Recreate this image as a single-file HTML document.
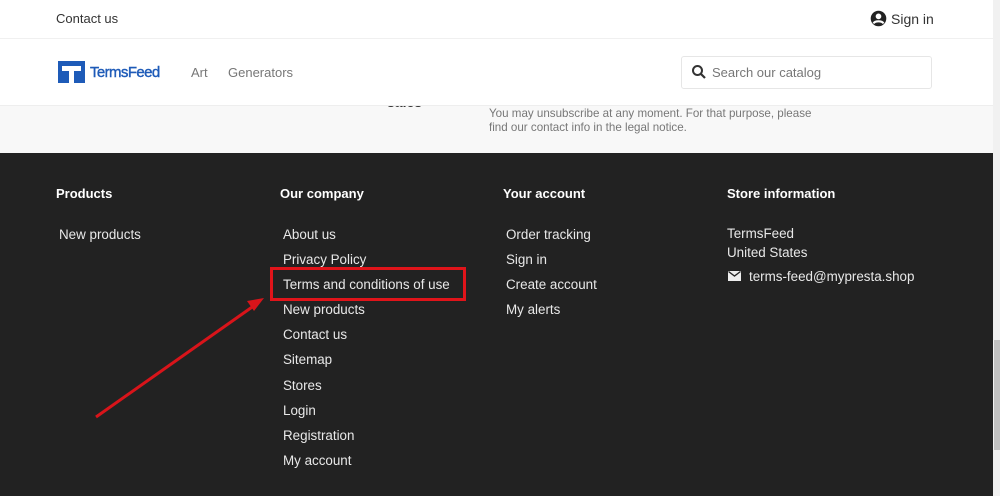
<!DOCTYPE html>
<html><head><style>
*{margin:0;padding:0;box-sizing:border-box}
body{width:1000px;height:496px;overflow:hidden;font-family:"Liberation Sans",sans-serif;background:#fff;position:relative}
.abs{position:absolute;white-space:nowrap}
.top{font-size:13px;color:#333}
.foot{position:absolute;left:0;top:153px;width:993px;height:343px;background:#222}
.h{font-size:13px;font-weight:bold;color:#fff}
.l{font-size:13.4px;color:#e8e8e8}
</style></head><body>
<div class="abs top" style="left:56px;top:11px">Contact us</div>
<svg class="abs" style="left:870px;top:10px" width="17" height="17" viewBox="0 0 24 24"><circle cx="12" cy="12" r="11" fill="#222"/><circle cx="12" cy="9" r="4" fill="#fff"/><path d="M5 19c2-4 12-4 14 0" stroke="#fff" stroke-width="3" fill="none"/></svg>
<div class="abs" style="left:891px;top:11px;font-size:14px;color:#333">Sign in</div>
<div class="abs" style="left:0;top:38px;width:993px;height:1px;background:#f0f0f0"></div>
<div class="abs" style="left:0;top:105px;width:993px;height:48px;background:#f8f8f8;border-top:1px solid #eee;overflow:hidden">
<div class="abs" style="left:387px;top:-12px;font-size:14px;font-weight:bold;color:#333">sales</div>
<div class="abs" style="left:489px;top:1px;font-size:11.6px;color:#777;line-height:14px">You may unsubscribe at any moment. For that purpose, please<br>find our contact info in the legal notice.</div>
</div>
<svg class="abs" style="left:58px;top:61px" width="27" height="22" viewBox="0 0 27 22"><rect width="27" height="22" fill="#1e5bb8"/><rect x="4" y="5" width="19" height="5" fill="#fff"/><rect x="11" y="5" width="5" height="17" fill="#fff"/></svg>
<div class="abs" style="left:90px;top:64px;font-size:15px;color:#1e5bb8;letter-spacing:-0.6px;-webkit-text-stroke:0.4px #1e5bb8">TermsFeed</div>
<div class="abs" style="left:191px;top:65px;font-size:13px;color:#777">Art</div>
<div class="abs" style="left:228px;top:65px;font-size:13px;color:#777">Generators</div>
<div class="abs" style="left:681px;top:56px;width:251px;height:33px;border:1px solid #e6e6e6;border-radius:3px"></div>
<svg class="abs" style="left:691px;top:64px" width="16" height="16" viewBox="0 0 16 16"><circle cx="6.5" cy="6.5" r="4.5" stroke="#333" stroke-width="2" fill="none"/><path d="M10 10l4 4" stroke="#333" stroke-width="2.2"/></svg>
<div class="abs" style="left:712px;top:65px;font-size:13px;color:#777">Search our catalog</div>
<div class="foot"></div>
<div class="abs" style="left:993px;top:0;width:7px;height:496px;background:#f1f1f1"></div>
<div class="abs" style="left:994px;top:340px;width:6px;height:110px;background:#c1c1c1"></div>
<div class="abs h" style="left:56px;top:186px">Products</div>
<div class="abs h" style="left:280px;top:186px">Our company</div>
<div class="abs h" style="left:503px;top:186px">Your account</div>
<div class="abs h" style="left:727px;top:186px">Store information</div>
<div class="abs l" style="left:59px;top:227px">New products</div>
<div class="abs l" style="left:283px;top:222px;line-height:25.1px">About us<br>Privacy Policy<br>Terms and conditions of use<br>New products<br>Contact us<br>Sitemap<br>Stores<br>Login<br>Registration<br>My account</div>
<div class="abs l" style="left:506px;top:222px;line-height:25.1px">Order tracking<br>Sign in<br>Create account<br>My alerts</div>
<div class="abs l" style="left:727px;top:224px;line-height:19px">TermsFeed<br>United States</div>
<svg class="abs" style="left:728px;top:271px" width="13" height="10" viewBox="0 0 13 10"><rect width="13" height="10" fill="#eee"/><path d="M0.5 0.5l6 4.5 6-4.5" stroke="#222" stroke-width="1.3" fill="none"/></svg>
<div class="abs l" style="left:749px;top:269px">terms-feed@mypresta.shop</div>
<div class="abs" style="left:270px;top:267px;width:196px;height:34px;border:3px solid #e0141a"></div>
<svg class="abs" style="left:0;top:0" width="1000" height="496"><path d="M96 417L255 305" stroke="#d8141a" stroke-width="3"/><path d="M264 298l-17 3 7 10z" fill="#d8141a"/></svg>
</body></html>
